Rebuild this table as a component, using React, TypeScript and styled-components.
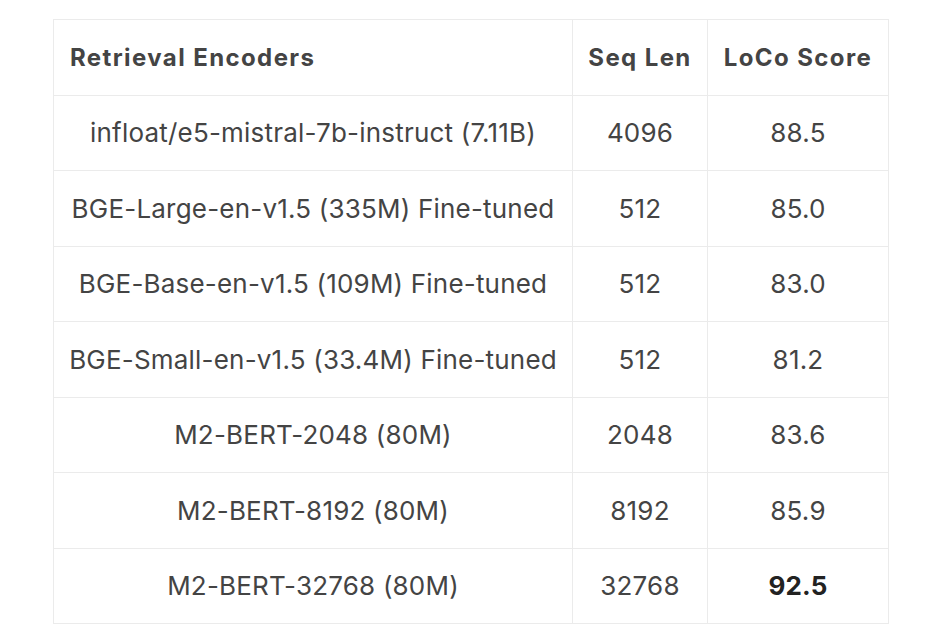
import React from "react";
import styled, { createGlobalStyle } from "styled-components";

const Global = createGlobalStyle`
  html, body { margin: 0; padding: 0; background: #ffffff; }
  body { font-family: "Inter", "Noto Sans", sans-serif; }
`;

const Page = styled.div`
  padding: 19px 0 0 53px;
`;

const Table = styled.table`
  border-collapse: collapse;
  width: 835px;
  table-layout: fixed;
  color: #3f3f3f;
`;

const Col = styled.col<{ $w: number }>`
  width: ${(p) => p.$w}px;
`;

const HeadCell = styled.th<{ $left?: boolean }>`
  height: 74.5px;
  border: 1px solid #ebebeb;
  font-size: 24px;
  font-weight: 700;
  color: #444444;
  text-align: ${(p) => (p.$left ? "left" : "center")};
  padding: 0 0 0 ${(p) => (p.$left ? "16px" : "0")};
  letter-spacing: 1.4px;
  white-space: nowrap;
`;

const Cell = styled.td<{ $bold?: boolean }>`
  height: 74.5px;
  border: 1px solid #ebebeb;
  font-size: 26px;
  font-weight: ${(p) => (p.$bold ? 700 : 400)};
  color: ${(p) => (p.$bold ? "#222222" : "#444444")};
  text-align: center;
  padding: 0;
  letter-spacing: 0.2px;
  white-space: nowrap;
`;

const rows: [string, string, string, boolean?][] = [
  ["infloat/e5-mistral-7b-instruct (7.11B)", "4096", "88.5"],
  ["BGE-Large-en-v1.5 (335M) Fine-tuned", "512", "85.0"],
  ["BGE-Base-en-v1.5 (109M) Fine-tuned", "512", "83.0"],
  ["BGE-Small-en-v1.5 (33.4M) Fine-tuned", "512", "81.2"],
  ["M2-BERT-2048 (80M)", "2048", "83.6"],
  ["M2-BERT-8192 (80M)", "8192", "85.9"],
  ["M2-BERT-32768 (80M)", "32768", "92.5", true],
];

export default function App() {
  return (
    <>
      <Global />
      <Page>
        <Table>
          <colgroup>
            <Col $w={519} />
            <Col $w={135} />
            <Col $w={181} />
          </colgroup>
          <thead>
            <tr>
              <HeadCell $left>Retrieval Encoders</HeadCell>
              <HeadCell>Seq Len</HeadCell>
              <HeadCell>LoCo Score</HeadCell>
            </tr>
          </thead>
          <tbody>
            {rows.map(([name, len, score, bold]) => (
              <tr key={name}>
                <Cell>{name}</Cell>
                <Cell>{len}</Cell>
                <Cell $bold={bold}>{score}</Cell>
              </tr>
            ))}
          </tbody>
        </Table>
      </Page>
    </>
  );
}
